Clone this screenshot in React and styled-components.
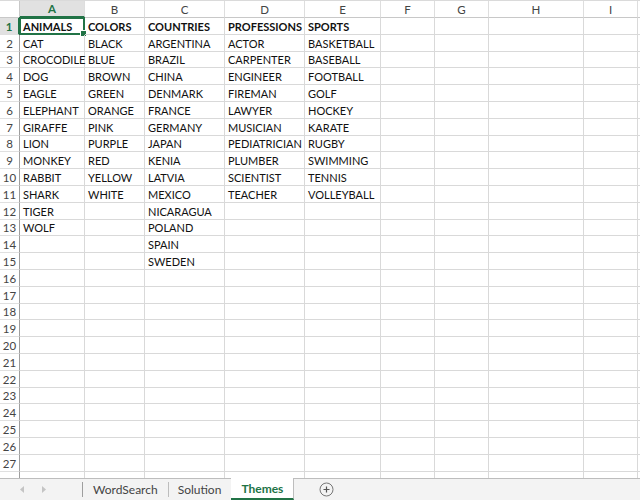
import styled, { createGlobalStyle } from "styled-components";

const GlobalStyle = createGlobalStyle`
  html, body {
    margin: 0;
    padding: 0;
    background: #ffffff;
  }
  body {
    font-family: Lato, "Open Sans", sans-serif;
  }
`;

const COLUMNS = [
  { key: "A", width: 65 },
  { key: "B", width: 60 },
  { key: "C", width: 80 },
  { key: "D", width: 80 },
  { key: "E", width: 76 },
  { key: "F", width: 54 },
  { key: "G", width: 54 },
  { key: "H", width: 95 },
  { key: "I", width: 54 },
];

const DATA = [
  ["ANIMALS", "CAT", "CROCODILE", "DOG", "EAGLE", "ELEPHANT", "GIRAFFE", "LION", "MONKEY", "RABBIT", "SHARK", "TIGER", "WOLF"],
  ["COLORS", "BLACK", "BLUE", "BROWN", "GREEN", "ORANGE", "PINK", "PURPLE", "RED", "YELLOW", "WHITE"],
  ["COUNTRIES", "ARGENTINA", "BRAZIL", "CHINA", "DENMARK", "FRANCE", "GERMANY", "JAPAN", "KENIA", "LATVIA", "MEXICO", "NICARAGUA", "POLAND", "SPAIN", "SWEDEN"],
  ["PROFESSIONS", "ACTOR", "CARPENTER", "ENGINEER", "FIREMAN", "LAWYER", "MUSICIAN", "PEDIATRICIAN", "PLUMBER", "SCIENTIST", "TEACHER"],
  ["SPORTS", "BASKETBALL", "BASEBALL", "FOOTBALL", "GOLF", "HOCKEY", "KARATE", "RUGBY", "SWIMMING", "TENNIS", "VOLLEYBALL"],
];

const ROW_COUNT = 27;
const GREEN = "#217346";

const Window = styled.div`
  width: 640px;
  height: 500px;
  display: flex;
  flex-direction: column;
  overflow: hidden;
  background: #fff;
`;

const SheetArea = styled.div`
  flex: 1;
  overflow: hidden;
  border-top: 1px solid #dadada;
`;

const Grid = styled.div`
  display: grid;
  grid-template-columns: 20px ${COLUMNS.map((c) => c.width + "px").join(" ")} 10px;
  grid-template-rows: 17px repeat(${ROW_COUNT}, 16.8px) 10px;
`;

const Corner = styled.div`
  border-right: 1px solid #c8c8c8;
  border-bottom: 1px solid #c8c8c8;
  background: #fff;
`;

const ColHeader = styled.div`
  display: flex;
  align-items: center;
  justify-content: center;
  font-size: 11.5px;
  font-weight: ${(p) => (p.$active ? 700 : 400)};
  color: ${(p) => (p.$active ? GREEN : "#444")};
  background: ${(p) => (p.$active ? "#e1e1e1" : "#fff")};
  border-right: 1px solid #dedede;
  border-bottom: ${(p) => (p.$active ? `2px solid ${GREEN}` : "1px solid #c8c8c8")};
  box-sizing: border-box;
`;

const RowHeader = styled.div`
  display: flex;
  align-items: flex-end;
  justify-content: center;
  padding-bottom: 1px;
  box-sizing: border-box;
  font-size: 11.5px;
  font-weight: ${(p) => (p.$active ? 700 : 400)};
  color: ${(p) => (p.$active ? GREEN : "#444")};
  background: ${(p) => (p.$active ? "#e1e1e1" : "#fff")};
  border-right: ${(p) => (p.$active ? `2px solid ${GREEN}` : "1px solid #9e9e9e")};
  border-bottom: 1px solid #e0e0e0;
`;

const Cell = styled.div`
  position: relative;
  box-sizing: border-box;
  display: flex;
  align-items: flex-end;
  padding: 0 0 1px 3px;
  font-size: 11px;
  font-weight: ${(p) => (p.$bold ? 700 : 400)};
  color: #111;
  white-space: nowrap;
  overflow: visible;
  border-right: 1px solid #d9d9d9;
  border-bottom: 1px solid #d9d9d9;
`;

const Selection = styled.div`
  position: absolute;
  left: -1px;
  top: -1px;
  right: -1px;
  bottom: -1px;
  border: 2px solid ${GREEN};
  pointer-events: none;
  &::after {
    content: "";
    position: absolute;
    right: -4px;
    bottom: -4px;
    width: 5px;
    height: 5px;
    background: ${GREEN};
    border: 1px solid #fff;
  }
`;

const TabBar = styled.div`
  height: 21px;
  display: flex;
  align-items: stretch;
  background: #f3f3f3;
  border-top: 1px solid #bdbdbd;
  font-size: 12px;
  color: #444;
`;

const NavButtons = styled.div`
  width: 83px;
  display: flex;
  align-items: center;
  padding-left: 20px;
  gap: 16px;
  box-sizing: border-box;
  border-right: 1px solid #9e9e9e;
  margin: 3px 0;
`;

const Tab = styled.div`
  display: flex;
  align-items: center;
  padding: 0 10px;
  position: relative;
  margin-top: -1px;
  background: ${(p) => (p.$active ? "#fff" : "transparent")};
  color: ${(p) => (p.$active ? GREEN : "#444")};
  font-weight: ${(p) => (p.$active ? 700 : 400)};
  border-right: ${(p) => (p.$active ? "1px solid #bdbdbd" : "none")};
  border-bottom: ${(p) => (p.$active ? `2px solid ${GREEN}` : "none")};
  &::before {
    content: "";
    display: ${(p) => (p.$sep ? "block" : "none")};
    position: absolute;
    left: 0;
    top: 4px;
    bottom: 3px;
    width: 1px;
    background: #bdbdbd;
  }
`;

const AddButton = styled.div`
  display: flex;
  align-items: center;
  margin-left: 25px;
`;

function Arrow({ dir }) {
  return (
    <svg width="5" height="7" viewBox="0 0 5 7">
      <path d={dir === "left" ? "M4 0 L0 3.5 L4 7 Z" : "M1 0 L5 3.5 L1 7 Z"} fill="#c4c4c4" />
    </svg>
  );
}

export default function App() {
  const rows = [];
  for (let r = 1; r <= ROW_COUNT + 1; r++) {
    const partial = r > ROW_COUNT;
    rows.push(
      <RowHeader key={`rh${r}`} $active={r === 1}>
        {partial ? "" : r}
      </RowHeader>
    );
    COLUMNS.forEach((c, ci) => {
      const value = DATA[ci] ? DATA[ci][r - 1] : undefined;
      rows.push(
        <Cell key={`${c.key}${r}`} $bold={r === 1}>
          {value}
          {r === 1 && ci === 0 && <Selection />}
        </Cell>
      );
    });
    rows.push(<Cell key={`pad${r}`} />);
  }

  return (
    <Window>
      <GlobalStyle />
      <SheetArea>
        <Grid>
          <Corner />
          {COLUMNS.map((c) => (
            <ColHeader key={c.key} $active={c.key === "A"}>
              {c.key}
            </ColHeader>
          ))}
          <ColHeader />
          {rows}
        </Grid>
      </SheetArea>
      <TabBar>
        <NavButtons>
          <Arrow dir="left" />
          <Arrow dir="right" />
        </NavButtons>
        <Tab>WordSearch</Tab>
        <Tab $sep>Solution</Tab>
        <Tab $active>Themes</Tab>
        <AddButton>
          <svg width="15" height="15" viewBox="0 0 15 15">
            <circle cx="7.5" cy="7.5" r="6.5" fill="none" stroke="#777" strokeWidth="1" />
            <path d="M7.5 4.5 V10.5 M4.5 7.5 H10.5" stroke="#555" strokeWidth="1.2" />
          </svg>
        </AddButton>
      </TabBar>
    </Window>
  );
}
